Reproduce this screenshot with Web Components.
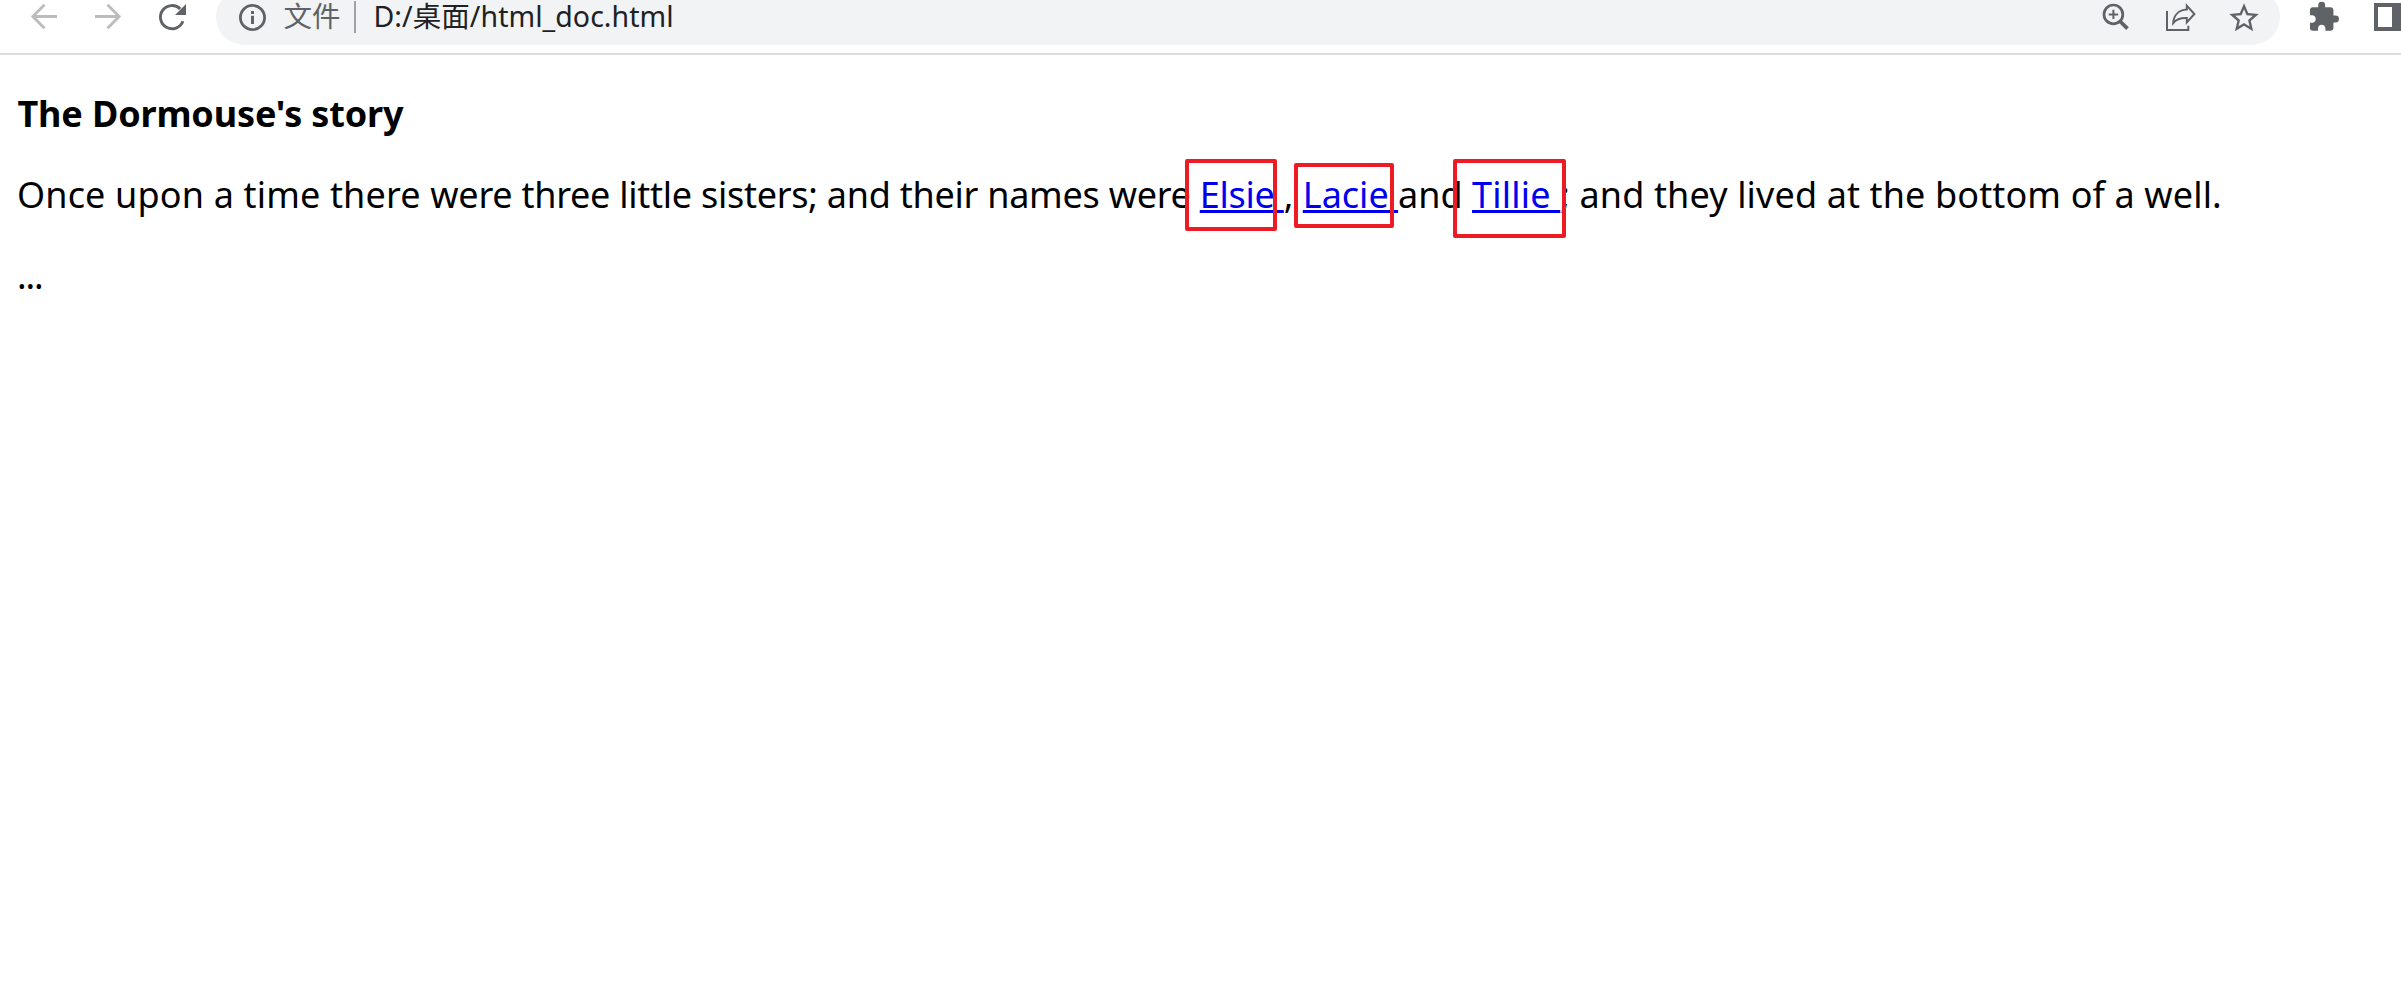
<!DOCTYPE html>
<html lang="zh-CN">
<head>
  <meta charset="utf-8">
  <title>html_doc.html</title>
  <style>
    body {
      margin: 0;
      background: #fff;
      overflow: hidden;
      font-family: "Noto Sans", "Noto Sans CJK SC", sans-serif;
    }
  </style>
</head>
<body>
  <browser-toolbar>
    <tool-icon name="back"></tool-icon>
    <tool-icon name="forward"></tool-icon>
    <tool-icon name="reload"></tool-icon>
    <address-bar scheme="文件" url="D:/桌面/html_doc.html">
      <tool-icon name="zoom"></tool-icon>
      <tool-icon name="share"></tool-icon>
      <tool-icon name="star"></tool-icon>
    </address-bar>
    <tool-icon name="extension"></tool-icon>
    <tool-icon name="panel"></tool-icon>
  </browser-toolbar>
  <story-page></story-page>

  <script>
    const ICONS = {
      back: '<g fill="none" stroke="#babcbe" stroke-width="2.8"><path d="M4.5 15.5H29M16.5 3.8L4.8 15.5l11.7 11.7"/></g>',
      forward: '<g fill="none" stroke="#babcbe" stroke-width="2.8"><path d="M3 15.5h24.5M15.5 3.8l11.7 11.7-11.7 11.7"/></g>',
      reload: '<path d="M26.9 20.3A11.6 11.6 0 1 1 24.2 7.9" fill="none" stroke="#5f6368" stroke-width="2.9"/><path d="M30 3v11H19z"/>',
      info: '<circle cx="16.5" cy="16.5" r="12.1" fill="none" stroke="#5f6368" stroke-width="2.8"/><path d="M15 10h3v3h-3zM15 14.7h3v8.3h-3z"/>',
      zoom: '<circle cx="13.4" cy="13.4" r="9.4" fill="none" stroke="#5f6368" stroke-width="2.7"/><path d="M13.4 8.7v9.4M8.7 13.4h9.4" stroke="#5f6368" stroke-width="2"/><path d="M19.8 20l7.7 7.6" stroke="#5f6368" stroke-width="3.8"/>',
      share: '<g fill="none" stroke="#5f6368" stroke-width="2"><path d="M3 10v19h21.3v-4.2"/><path d="M22.8 4.6l7.6 8.4-7.6 8.4v-4.3C17 16.8 12.3 18.4 9.2 22 9.8 14 15 9 22.8 8.6z"/></g>',
      star: '<path transform="translate(-1.6 -.6) scale(1.47)" d="M22 9.24l-7.19-.62L12 2 9.19 8.63 2 9.24l5.46 4.73L5.82 21 12 17.27 18.18 21l-1.63-7.03L22 9.24zM12 15.4l-3.76 2.27 1-4.28-3.32-2.88 4.38-.38L12 6.1l1.71 4.04 4.38.38-3.32 2.88 1 4.28L12 15.4z"/>',
      extension: '<path transform="translate(-.8 -.7) scale(1.38)" d="M20.5 11H19V7c0-1.1-.9-2-2-2h-4V3.5a2.5 2.5 0 0 0-5 0V5H4c-1.1 0-1.99.9-1.99 2v3.8H3.5c1.49 0 2.7 1.21 2.7 2.7s-1.21 2.7-2.7 2.7H2V20c0 1.1.9 2 2 2h3.8v-1.5c0-1.49 1.21-2.7 2.7-2.7 1.49 0 2.7 1.21 2.7 2.7V22H17c1.1 0 2-.9 2-2v-4h1.5a2.5 2.5 0 0 0 0-5z"/>',
      panel: '<path fill-rule="evenodd" d="M2 2h30v28H2zM6 6v20h14V6z"/>'
    };

    class ToolIcon extends HTMLElement {
      constructor() {
        super();
        this.attachShadow({ mode: 'open' });
      }

      connectedCallback() {
        this.shadowRoot.innerHTML = `
        <style>
          :host {
            display: block;
            flex: none;
            width: 32px;
            height: 32px;
          }

          svg {
            display: block;
            fill: #5f6368;
          }
        </style>
        <svg width="32" height="32" viewBox="0 0 32 32">${ICONS[this.getAttribute('name')] || ''}</svg>
        `;
      }
    }

    customElements.define('tool-icon', ToolIcon);

    class AddressBar extends HTMLElement {
      constructor() {
        super();
        const template = document.createElement('template');
        template.innerHTML = `
        <style>
          :host {
            display: flex;
            flex: 1;
            align-items: center;
            box-sizing: border-box;
            height: 56px;
            padding: 0 20px;
            border-radius: 28px;
            background: #f1f3f4;
            font-size: 28.5px;
            line-height: 40px;
          }

          .scheme {
            margin-left: 15.5px;
            color: #5f6368;
          }

          .divider {
            width: 2px;
            height: 32px;
            margin: 0 18px 0 13px;
            background: #9fa2a6;
          }

          .url {
            flex: 1;
            letter-spacing: 0.05px;
            color: #202124;
          }

          .scheme, .url {
            padding-bottom: 2px;
          }

          .actions {
            display: flex;
            gap: 32px;
          }
        </style>
        <tool-icon name="info"></tool-icon>
        <span class="scheme"></span>
        <span class="divider"></span>
        <span class="url"></span>
        <div class="actions"><slot></slot></div>
        `;
        this.attachShadow({ mode: 'open' });
        this.shadowRoot.appendChild(template.content.cloneNode(true));
      }

      connectedCallback() {
        this.shadowRoot.querySelector('.scheme').textContent = this.getAttribute('scheme');
        this.shadowRoot.querySelector('.url').textContent = this.getAttribute('url');
      }
    }

    customElements.define('address-bar', AddressBar);

    class BrowserToolbar extends HTMLElement {
      constructor() {
        super();
        this.attachShadow({ mode: 'open' });
        this.shadowRoot.innerHTML = `
        <style>
          :host {
            display: flex;
            align-items: center;
            gap: 32px;
            box-sizing: border-box;
            height: 67px;
            margin-top: -12px;
            padding: 1px 0 8px 28px;
            border-bottom: 2px solid #dadbdd;
          }

          ::slotted(address-bar) {
            margin: 0 -4px;
          }

          ::slotted([name="panel"]) {
            margin-right: -3px;
          }
        </style>
        <slot></slot>
        `;
      }
    }

    customElements.define('browser-toolbar', BrowserToolbar);

    // Link with a red marker frame drawn over it
    class MarkedLink extends HTMLElement {
      constructor() {
        super();
        this.attachShadow({ mode: 'open' });
        this.shadowRoot.innerHTML = `
        <style>
          :host {
            display: inline-block;
            position: relative;
            white-space: normal;
          }

          a {
            white-space: pre;
            color: #0000ee;
            text-decoration: underline;
            text-decoration-thickness: 3px;
            text-underline-offset: 2px;
            text-decoration-skip-ink: none;
          }

          i {
            position: absolute;
            z-index: 1;
            left: var(--x);
            top: var(--y);
            width: var(--w);
            height: var(--h);
            box-sizing: border-box;
            border: 4px solid #ed1c24;
            border-radius: 2px;
          }
        </style>
        <a href="#"><slot></slot></a><i></i>
        `;
      }
    }

    customElements.define('marked-link', MarkedLink);

    class StoryPage extends HTMLElement {
      constructor() {
        super();
        this.attachShadow({ mode: 'open' });
        this.shadowRoot.innerHTML = `
        <style>
          :host {
            display: block;
            padding: 36px 17px 0;
            font-size: 36px;
            line-height: 46px;
            color: #000;
          }

          p {
            margin: 0 0 35px;
            white-space: pre;
          }

          .title {
            padding-left: 0.5px;
            letter-spacing: -0.15px;
          }

          .lead {
            letter-spacing: 0.16px;
          }

          .names {
            letter-spacing: -0.26px;
          }

          .tail {
            letter-spacing: 0.13px;
          }

          .more {
            letter-spacing: -1.1px;
          }

          .elsie { --x: -15px; --y: -13px; --w: 92px; --h: 72px; letter-spacing: -0.25px; }
          .lacie { --x: -9px; --y: -9px; --w: 100px; --h: 65px; }
          .tillie { --x: -19px; --y: -13px; --w: 113px; --h: 79px; letter-spacing: 0.2px; }
        </style>
        <p class="title"><b>The Dormouse's story</b></p>
        <p><span class="lead">Once upon a time there </span><span class="names">were three little sisters; and their names were </span><marked-link class="elsie">Elsie </marked-link>, <marked-link class="lacie">Lacie </marked-link>and <marked-link class="tillie">Tillie </marked-link><span class="tail">; and they lived at the bottom of a well.</span></p>
        <p class="more">...</p>
        `;
      }
    }

    customElements.define('story-page', StoryPage);
  </script>
</body>
</html>
